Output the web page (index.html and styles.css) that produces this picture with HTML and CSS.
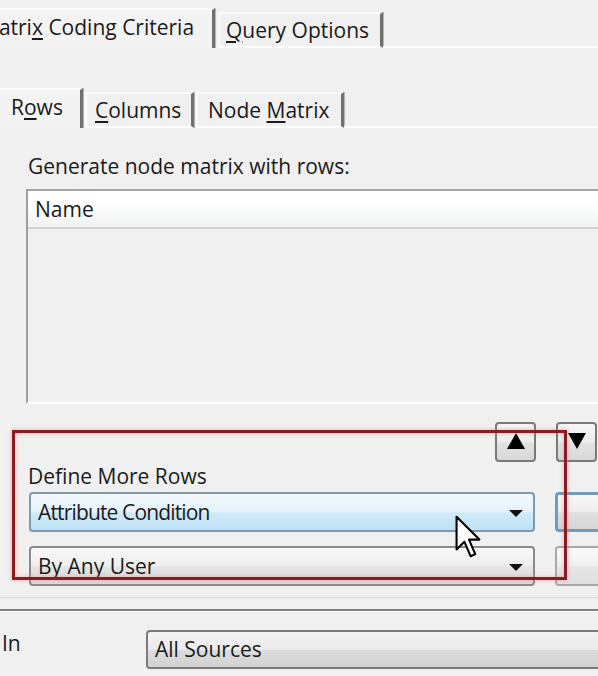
FILE: index.html
```html
<!DOCTYPE html>
<html>
<head>
<meta charset="utf-8">
<title>Node Matrix Query</title>
<link rel="stylesheet" href="styles.css">
</head>
<body>
<div class="screen">
  <div class="tabstrip top">
    <div class="tab active t-matrix"><span>Matri<u>x</u> Coding Criteria</span></div>
    <div class="tab t-query"><span><u>Q</u>uery Options</span></div>
    <div class="fill"></div>
  </div>

  <div class="page">
    <div class="tabstrip sub">
      <div class="tab active t-rows"><span>R<u>o</u>ws</span></div>
      <div class="tab t-cols"><span><u>C</u>olumns</span></div>
      <div class="tab t-node"><span>Node <u>M</u>atrix</span></div>
      <div class="fill"></div>
    </div>

    <div class="subpage">
      <div class="label gen">Generate node matrix with rows:</div>
      <div class="listbox">
        <div class="lb-head">Name</div>
        <div class="lb-body"></div>
      </div>

      <div class="movebtns">
        <div class="sq"><svg width="20" height="18" viewBox="0 0 20 18"><polygon points="10,1 19,17 1,17" fill="#000"/></svg></div>
        <div class="sq"><svg width="20" height="18" viewBox="0 0 20 18"><polygon points="1,1 19,1 10,17" fill="#000"/></svg></div>
      </div>

      <div class="label define">Define More Rows</div>
      <div class="row">
        <div class="combo hot"><span class="tight">Attribute Condition</span><i class="drop"></i></div>
        <div class="sidebtn focus"></div>
      </div>
      <div class="row second">
        <div class="combo"><span>By Any User</span><i class="drop"></i></div>
        <div class="sidebtn"></div>
      </div>
    </div>
  </div>

  <div class="sep"></div>

  <div class="inrow">
    <span class="inlabel">In</span>
    <div class="combo big"><span>All Sources</span></div>
  </div>

  <div class="annot"></div>
  <svg class="cursor" width="27" height="44" viewBox="0 0 26 42">
    <polygon points="1.5,1.5 1.5,33 9,25.5 15,39.5 19.5,37.5 13.5,23.5 23.5,23.5" fill="#fff" stroke="#000" stroke-width="2" stroke-linejoin="round"/>
  </svg>
</div>
</body>
</html>
```

FILE: styles.css
```css
* { box-sizing: border-box; margin: 0; padding: 0; }

html, body { width: 598px; height: 676px; overflow: hidden; }

body {
  background: #f0f0f0;
  font-family: "Open Sans", "Noto Sans", sans-serif;
  font-size: 21px;
  color: #1a1a1a;
}

u { text-decoration-thickness: 2px; text-underline-offset: 3px; }

.screen {
  position: relative;
  width: 598px;
  height: 676px;
  overflow: hidden;
}

/* ---------- tab strips ---------- */
.tabstrip { display: flex; align-items: flex-end; }
.tabstrip.top { height: 48px; }
.tabstrip.sub { height: 40px; }

.tab {
  display: flex;
  align-items: center;
  flex: none;
  white-space: nowrap;
  background: #f0f0f0;
  border-top: 2px solid #fbfbfb;
  border-left: 2px solid #fbfbfb;
  border-right: 3px solid #707070;
  border-bottom: 2px solid #fff;
  box-shadow: 1px 0 0 #b4b4b4;
}
.tab.active { border-bottom: 0; background: #f3f3f3; }

.fill { flex: 1; border-bottom: 2px solid #fff; }

.t-matrix { margin-left: -34px; width: 249px; height: 40px; padding: 0 0 4px 12px; }
.t-query  { margin-left: 3px; width: 165px; height: 36px; padding: 0 0 0 6px; }

.t-rows { width: 83px; height: 40px; padding: 0 0 4px 11px; border-left: 0; }
.t-cols { margin-left: 2px; width: 109px; height: 36px; padding-left: 8px; }
.t-node { margin-left: 2px; width: 148px; height: 36px; padding-left: 10px; }

/* ---------- page ---------- */
.page {
  padding-top: 40px;
  padding-bottom: 11px;
  border-bottom: 1px solid #dadada;
}

.subpage { display: flex; flex-direction: column; }

.label { line-height: 26px; padding-left: 28px; white-space: nowrap; }
.label.gen { margin-top: 25px; }

.listbox {
  margin-top: 10px;
  margin-left: 26px;
  width: 600px;
  height: 215px;
  border-top: 2px solid #a5a5a5;
  border-left: 2px solid #a0a0a0;
  border-bottom: 2px solid #fff;
  display: flex;
  flex-direction: column;
}
.lb-head {
  height: 38px;
  line-height: 36px;
  padding-left: 7px;
  background: linear-gradient(#ffffff 0%, #ffffff 35%, #f1f2f3 100%);
  border-bottom: 2px solid #d2d2d2;
}
.lb-body { flex: 1; background: #f0f0f0; }

.movebtns {
  display: flex;
  gap: 20px;
  margin-top: 18px;
  margin-left: 495px;
}
.sq {
  width: 41px;
  height: 40px;
  flex: none;
  display: flex;
  align-items: center;
  justify-content: center;
  border: 2px solid #7a7a7a;
  border-radius: 4px;
  background: linear-gradient(#f6f6f6, #ededed 50%, #e2e2e2 52%, #d8d8d8);
}
.sq svg { margin-top: -2px; }

.label.define { margin-top: 1px; }

.row {
  display: flex;
  gap: 20px;
  margin-top: 3px;
  padding-left: 29px;
}
.row.second { margin-top: 14px; }

.combo {
  flex: none;
  width: 506px;
  height: 40px;
  display: flex;
  align-items: center;
  justify-content: space-between;
  padding: 0 10px 0 7px;
  border: 2px solid #8b8b8b;
  border-radius: 4px;
  background: linear-gradient(#f8f8f8, #efefef 50%, #e4e4e4 52%, #dcdcdc);
  white-space: nowrap;
}
.combo.hot {
  border-color: #7f98ab;
  background: linear-gradient(#f3f9fd, #e3f2fb 50%, #d0eaf9 52%, #bfe2f6);
}
.tight { letter-spacing: -0.85px; }

.drop {
  width: 0;
  height: 0;
  border-left: 7px solid transparent;
  border-right: 7px solid transparent;
  border-top: 7px solid #111;
  margin-top: 2px;
}

.sidebtn {
  flex: none;
  width: 60px;
  height: 40px;
  border: 2px solid #a8a8a8;
  border-radius: 4px;
  background: linear-gradient(#fafafa, #f0f0f0 50%, #e6e6e6 52%, #e0e0e0);
}
.sidebtn.focus {
  border: 3px solid #6f9cbc;
  background: linear-gradient(#f8f8f8, #ededed 50%, #e0e0e0 52%, #d6d6d6);
}

/* ---------- bottom ---------- */
.sep {
  margin-top: 11px;
  height: 3px;
  border-top: 2px solid #808080;
  border-bottom: 1px solid #ffffff;
}

.inrow {
  display: flex;
  align-items: center;
  padding-top: 17px;
}
.inlabel { flex: none; width: 146px; padding-left: 2px; padding-bottom: 12px; }
.combo.big {
  width: 470px;
  height: 39px;
  border-color: #7b7b7b;
  background: linear-gradient(#f3f3f3, #ebebeb 50%, #dcdcdc 52%, #d2d2d2);
}

/* ---------- overlays ---------- */
.annot {
  position: absolute;
  left: 12px;
  top: 430px;
  width: 555px;
  height: 150px;
  border: 3px solid #8c1a1f;
  box-shadow: 0 0 4px rgba(230, 110, 110, 0.6), inset 0 0 4px rgba(230, 110, 110, 0.5);
}

.cursor {
  position: absolute;
  left: 455px;
  top: 515px;
}
```
